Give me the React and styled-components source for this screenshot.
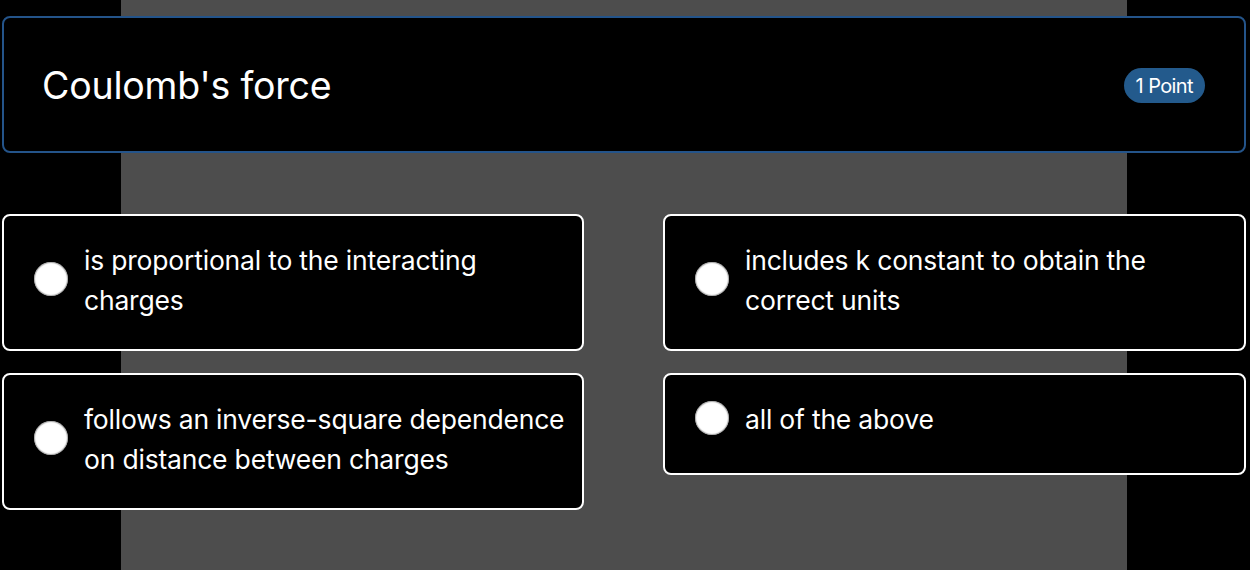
import React from 'react'
import styled, { createGlobalStyle } from "styled-components";

const GlobalStyle = createGlobalStyle`
  body {
    margin: 0;
    background: #000;
    font-family: Inter, "Noto Sans", sans-serif;
  }
`;

const Page = styled.div`
  min-height: 570px;
  box-sizing: border-box;
  padding: 16px 4px 0 2px;
  background: linear-gradient(
    to right,
    #000 121px,
    #4d4d4d 121px,
    #4d4d4d 1127px,
    #000 1127px
  );
`;

const QuestionCard = styled.div`
  display: flex;
  align-items: center;
  justify-content: space-between;
  height: 137px;
  box-sizing: border-box;
  padding: 2px 39px 0 38px;
  background: #000;
  border: 2px solid #24548a;
  border-radius: 8px;
`;

const Title = styled.h1`
  margin: 0;
  color: #fff;
  font-size: 37.5px;
  font-weight: 400;
  letter-spacing: -0.2px;
`;

const Badge = styled.span`
  display: inline-flex;
  align-items: center;
  height: 35px;
  padding: 0 12px;
  border-radius: 18px;
  background: #235a8c;
  color: #fff;
  font-size: 20px;
  letter-spacing: -0.6px;
`;

const Options = styled.div`
  display: grid;
  grid-template-columns: 582px 583px;
  column-gap: 79px;
  row-gap: 22px;
  align-items: start;
  margin-top: 61px;
`;

const Option = styled.label`
  display: flex;
  min-height: 102px;
  box-sizing: border-box;
  padding: 24px 8px 29px 30px;
  background: #000;
  border: 2px solid #fff;
  border-radius: 8px;
  cursor: pointer;
`;

const Content = styled.div`
  display: flex;
  align-items: center;
  gap: 16px;
  align-self: flex-start;
`;

const Radio = styled.span`
  flex: none;
  width: 34px;
  height: 34px;
  margin-top: -2px;
  border-radius: 50%;
  background: radial-gradient(circle, #fff 62%, #ececec 82%, #a0a0a0 100%);
  box-shadow: inset 0 0 1px 1px rgba(120, 120, 120, 0.6);
`;

const OptionText = styled.span`
  color: #fff;
  font-size: 26.5px;
  line-height: 40px;
  letter-spacing: -0.2px;
`;

const answers = [
  "is proportional to the interacting charges",
  "includes k constant to obtain the correct units",
  "follows an inverse-square dependence on distance between charges",
  "all of the above",
];

export default function App() {
  return (
    <Page>
      <GlobalStyle />
      <QuestionCard>
        <Title>Coulomb's force</Title>
        <Badge>1 Point</Badge>
      </QuestionCard>
      <Options>
        {answers.map((a) => (
          <Option key={a}>
            <Content>
              <Radio />
              <OptionText>{a}</OptionText>
            </Content>
          </Option>
        ))}
      </Options>
    </Page>
  );
}
